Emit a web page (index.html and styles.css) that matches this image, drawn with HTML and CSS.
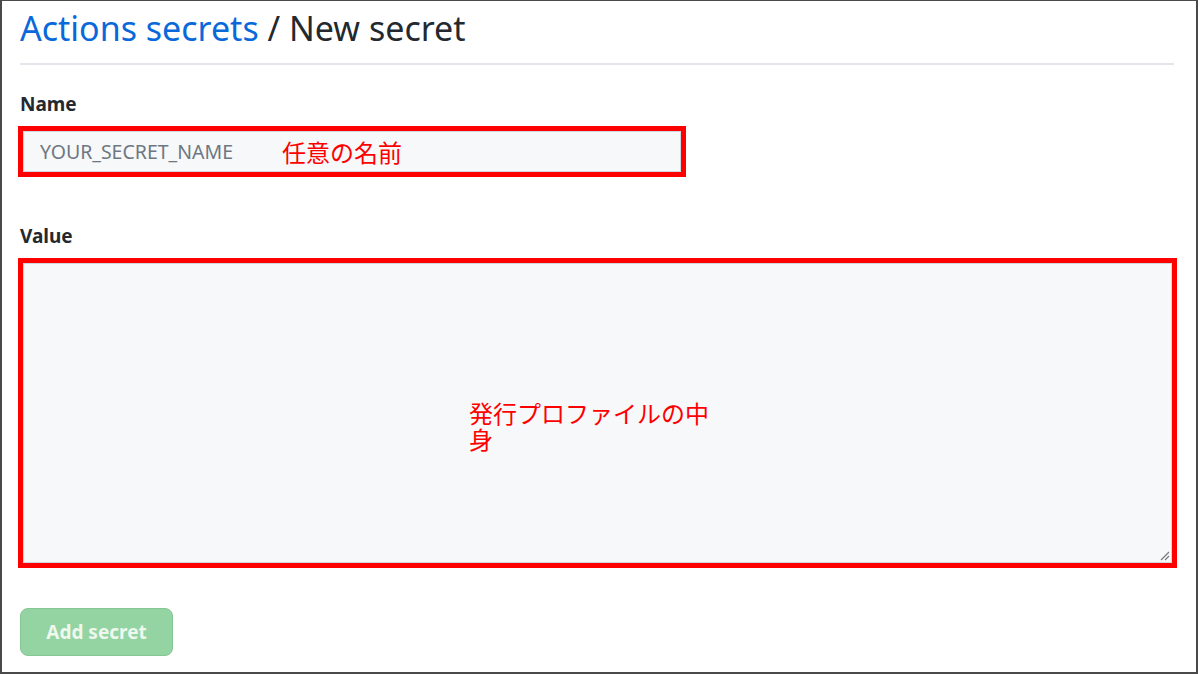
FILE: index.html
```html
<!DOCTYPE html>
<html lang="ja">
<head>
<meta charset="utf-8">
<title>New secret</title>
<link rel="stylesheet" href="styles.css">
</head>
<body>
<div class="frame">
  <div class="page">
    <div class="subhead">
      <h1 class="subhead-heading"><a class="crumb" href="#">Actions secrets</a> / New secret</h1>
    </div>
    <form class="secret-form">
      <label class="field-label" for="secret-name">Name</label>
      <div class="mark mark-name">
        <div class="input-box">
          <span class="placeholder">YOUR_SECRET_NAME</span>
          <span class="note note-name">任意の名前</span>
        </div>
      </div>
      <label class="field-label field-label-value" for="secret-value">Value</label>
      <div class="mark mark-value">
        <div class="textarea-box">
          <div class="note note-value">
            <span class="note-line">発行プロファイルの中</span>
            <span class="note-line">身</span>
          </div>
          <svg class="grip" width="12" height="12" viewBox="0 0 12 12"><path d="M11 3 L3 11 M11 7 L7 11" stroke="#7a7a7a" stroke-width="1.2" fill="none"/></svg>
        </div>
      </div>
      <div class="actions">
        <button class="btn-add" type="button" disabled>Add secret</button>
      </div>
    </form>
  </div>
</div>
</body>
</html>
```

FILE: styles.css
```css
html, body {
  margin: 0;
  padding: 0;
  background: #ffffff;
}

.frame {
  box-sizing: border-box;
  width: 1198px;
  height: 674px;
  border-top: 1px solid #4a4a4a;
  border-left: 2px solid #4a4a4a;
  border-right: 2px solid #4a4a4a;
  border-bottom: 2px solid #4a4a4a;
  overflow: hidden;
  font-family: "Noto Sans", "Open Sans", "Noto Sans CJK JP", sans-serif;
  color: #24292f;
}

.page {
  padding: 0 22px 0 16px;
}

.subhead {
  margin-left: 2px;
  height: 62px;
  border-bottom: 2px solid #e3e7eb;
}

.subhead-heading {
  margin: 0;
  font-size: 34px;
  font-weight: 400;
  line-height: 55px;
  color: #24292f;
}

.crumb {
  color: #0969da;
  text-decoration: none;
}

.secret-form {
  display: flex;
  flex-direction: column;
  align-items: flex-start;
}

.field-label {
  display: block;
  margin: 26px 0 0 2px;
  font-size: 19px;
  font-weight: 700;
  line-height: 26px;
  color: #24292f;
}

.field-label-value {
  margin-top: 46px;
}

.mark {
  border: 5px solid #ff0000;
  margin-top: 9px;
}

.mark-name {
  width: 658px;
}

.mark-value {
  width: 1149px;
}

.input-box {
  box-sizing: border-box;
  height: 41px;
  background: #f6f8fa;
  border: 1px solid #d0d7de;
  display: flex;
  align-items: center;
  padding-left: 16px;
}

.placeholder {
  font-size: 19.5px;
  color: #6e7781;
  width: 242px;
}

.note {
  color: #ff0000;
  font-family: "Noto Sans CJK JP", sans-serif;
  font-size: 24px;
}

.note-name {
  line-height: 30px;
}

.textarea-box {
  box-sizing: border-box;
  height: 300px;
  background: #f6f8fa;
  border: 1px solid #d0d7de;
  position: relative;
  display: flex;
  align-items: center;
  padding-left: 445px;
}

.note-value {
  display: flex;
  flex-direction: column;
  margin-top: 26px;
}

.note-line {
  display: block;
  line-height: 26px;
}

.grip {
  position: absolute;
  right: 1px;
  bottom: 1px;
}

.actions {
  margin-top: 40px;
  margin-left: 2px;
}

.btn-add {
  box-sizing: border-box;
  width: 153px;
  height: 48px;
  background: #94d3a2;
  border: 1px solid #86c594;
  border-radius: 8px;
  color: #eef8ee;
  font-family: "Noto Sans", "Open Sans", sans-serif;
  font-size: 19px;
  font-weight: 700;
  padding: 0;
}
```
